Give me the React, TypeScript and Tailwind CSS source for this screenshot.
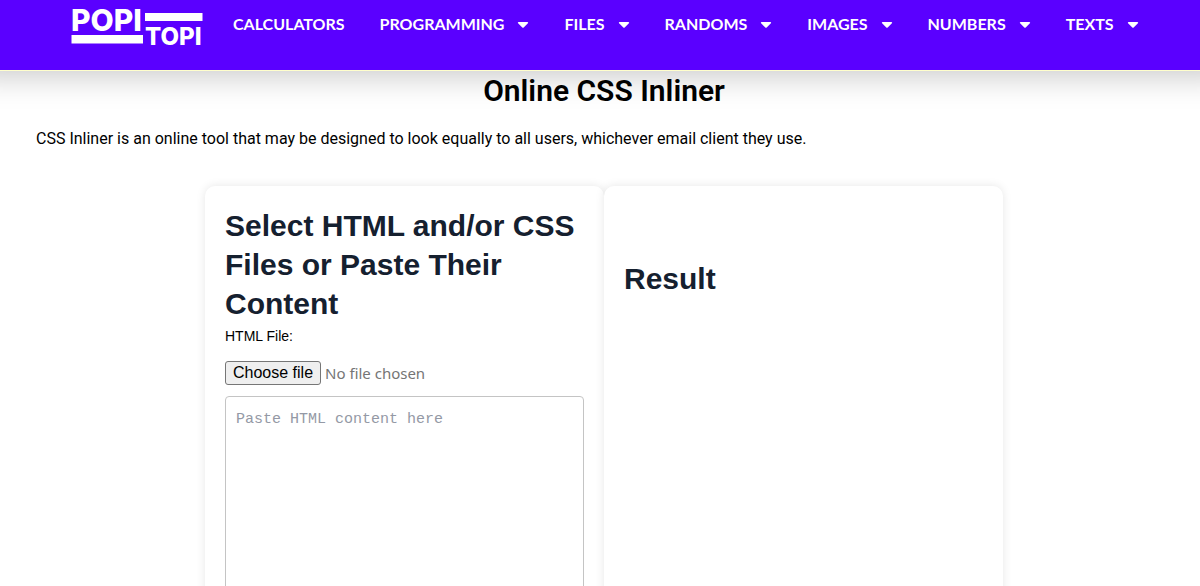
import { useRef, useState } from "react";

type NavItem = {
  label: string;
  hasMenu: boolean;
};

const navItems: NavItem[] = [
  { label: "CALCULATORS", hasMenu: false },
  { label: "PROGRAMMING", hasMenu: true },
  { label: "FILES", hasMenu: true },
  { label: "RANDOMS", hasMenu: true },
  { label: "IMAGES", hasMenu: true },
  { label: "NUMBERS", hasMenu: true },
  { label: "TEXTS", hasMenu: true },
];

function Logo() {
  return (
    <svg width="134" height="60" viewBox="0 0 134 60" fill="#fff" role="img" aria-label="Popi Topi">
      <text x="0" y="31" fontFamily="Inter, sans-serif" fontWeight="800" fontSize="30">
        POPI
      </text>
      <rect x="0.5" y="35" width="71.5" height="8.5" />
      <rect x="74" y="13" width="57.5" height="8" />
      <text x="74" y="45" fontFamily="Inter, sans-serif" fontWeight="800" fontSize="24">
        TOPI
      </text>
    </svg>
  );
}

function Caret() {
  return (
    <svg width="12" height="8" viewBox="0 0 12 8" fill="currentColor" className="mt-0.5" aria-hidden="true">
      <path d="M1.6 1h8.8c.7 0 1 .8.5 1.3L6.700 6.500a1 1 0 0 1-1.400 0L1.100 2.300C.6 1.800.9 1 1.600 1z" />
    </svg>
  );
}

function Header() {
  return (
    <header className="relative z-10 border-b border-[#ffffcc] bg-[#5a00ff] shadow-[0_-25px_30px_30px_rgba(0,0,0,0.22)]">
      <div className="flex h-[70px] items-start pl-[71px]">
        <a href="#" className="shrink-0">
          <Logo />
        </a>
        <nav className="ml-7 flex gap-[35px] pt-3 font-['Lato',sans-serif] text-base leading-6 font-bold text-white">
          {navItems.map(item => (
            <a key={item.label} href="#" className="flex items-center gap-[13px]">
              {item.label}
              {item.hasMenu && <Caret />}
            </a>
          ))}
        </nav>
      </div>
    </header>
  );
}

function HtmlForm() {
  const fileInput = useRef<HTMLInputElement>(null);
  const [fileName, setFileName] = useState("No file chosen");

  return (
    <section className="flex-1 rounded-[10px] bg-white p-5 shadow-[0_0_10px_rgba(0,0,0,0.1)]">
      <h2 className="text-[30px] leading-[39px] font-bold text-[#15202f]">
        Select HTML and/or CSS Files or Paste Their Content
      </h2>
      <label htmlFor="html-file" className="block text-sm leading-[26px]">
        HTML File:
      </label>
      <div className="mt-3 flex items-center gap-1">
        <input
          id="html-file"
          ref={fileInput}
          type="file"
          accept=".html"
          className="hidden"
          onChange={e => setFileName(e.target.files?.[0]?.name ?? "No file chosen")}
        />
        <button
          type="button"
          onClick={() => fileInput.current?.click()}
          className="h-6 rounded-[3px] border border-[#767676] bg-[#efefef] px-[7px] text-base leading-5"
        >
          Choose file
        </button>
        <span className="font-['Noto_Sans',sans-serif] text-[15px] leading-[22px] text-[#757575]">{fileName}</span>
      </div>
      <textarea
        aria-label="HTML content"
        placeholder="Paste HTML content here"
        className="mt-[11px] block h-[300px] w-full resize-none rounded-[4px] border border-[#c4c4c4] p-[10px] font-['Liberation_Mono',monospace] text-[15px] leading-[26px] placeholder:text-[#9499a5]"
      />
    </section>
  );
}

export default function App() {
  return (
    <div className="h-screen overflow-hidden bg-white font-['Roboto',sans-serif] text-black">
      <Header />
      <main className="pr-7 pl-9">
        <h1 className="pt-0.5 text-center text-[30px] leading-9 font-semibold">Online CSS Inliner</h1>
        <p className="mt-[18px] text-base leading-6">
          CSS Inliner is an online tool that may be designed to look equally to all users, whichever email client they use.
        </p>
        <div className="mx-auto mt-[35px] flex max-w-[798px] font-['Liberation_Sans',sans-serif]">
          <HtmlForm />
          <section className="flex-1 rounded-[10px] bg-white p-5 shadow-[0_0_10px_rgba(0,0,0,0.1)]">
            <h2 className="mt-[53px] text-[30px] leading-[39px] font-bold text-[#15202f]">Result</h2>
          </section>
        </div>
      </main>
    </div>
  );
}
